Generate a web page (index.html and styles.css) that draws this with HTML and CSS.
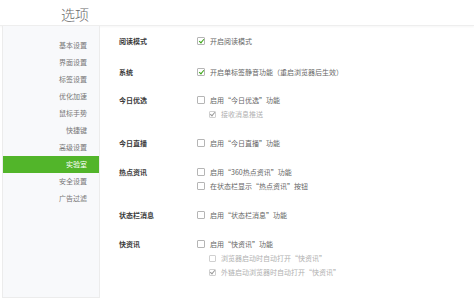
FILE: index.html
```html
<!DOCTYPE html>
<html>

<head>
  <title>选项</title>
  <link rel="stylesheet" href="styles.css">
</head>

<body>
  <div class="header">
    <h1 class="title">选项</h1>
  </div>

  <div class="main">
    <ul class="sidebar">
      <li>基本设置</li>
      <li>界面设置</li>
      <li>标签设置</li>
      <li>优化加速</li>
      <li>鼠标手势</li>
      <li>快捷键</li>
      <li>高级设置</li>
      <li class="active">实验室</li>
      <li>安全设置</li>
      <li>广告过滤</li>
    </ul>

    <div class="content">
      <div class="section first">
        <div class="label">阅读模式</div>
        <div class="options">
          <label class="opt"><span class="box checked"></span>开启阅读模式</label>
        </div>
      </div>

      <div class="section tight">
        <div class="label">系统</div>
        <div class="options">
          <label class="opt"><span class="box checked"></span>开启单标签静音功能（重启浏览器后生效）</label>
        </div>
      </div>

      <div class="section">
        <div class="label">今日优选</div>
        <div class="options">
          <label class="opt"><span class="box"></span>启用“今日优选”功能</label>
          <label class="opt sub disabled"><span class="box checked"></span>接收消息推送</label>
        </div>
      </div>

      <div class="section">
        <div class="label">今日直播</div>
        <div class="options">
          <label class="opt"><span class="box"></span>启用“今日直播”功能</label>
        </div>
      </div>

      <div class="section">
        <div class="label">热点资讯</div>
        <div class="options">
          <label class="opt"><span class="box"></span>启用“360热点资讯”功能</label>
          <label class="opt"><span class="box"></span>在状态栏显示“热点资讯”按钮</label>
        </div>
      </div>

      <div class="section">
        <div class="label">状态栏消息</div>
        <div class="options">
          <label class="opt"><span class="box"></span>启用“状态栏消息”功能</label>
        </div>
      </div>

      <div class="section">
        <div class="label">快资讯</div>
        <div class="options">
          <label class="opt"><span class="box"></span>启用“快资讯”功能</label>
          <label class="opt sub disabled"><span class="box"></span>浏览器启动时自动打开“快资讯”</label>
          <label class="opt sub disabled"><span class="box checked"></span>外链启动浏览器时自动打开“快资讯”</label>
        </div>
      </div>
    </div>
  </div>
</body>

</html>
```

FILE: styles.css
```css
body {
  margin: 0;
  font-family: "Noto Sans CJK SC", "Noto Sans", sans-serif;
  background-color: #ffffff;
  color: #555;
}

.header {
  height: 25px;
  border-bottom: 1px solid #eeeeee;
  box-shadow: 0 1px 2px rgba(0, 0, 0, 0.04);
}

.title {
  margin: 0;
  width: 89px;
  text-align: right;
  font-size: 14px;
  font-weight: 300;
  line-height: 28px;
  color: #6a6a6a;
}

.main {
  display: flex;
  align-items: flex-start;
}

.sidebar {
  list-style: none;
  margin: 0 0 0 2px;
  padding: 11px 0 0;
  width: 96px;
  height: 260px;
  background-color: #f8f9fb;
  border-left: 1px solid #ececec;
  border-right: 1px solid #ececec;
  border-bottom: 1px solid #ececec;
}

.sidebar li {
  height: 17px;
  line-height: 17px;
  padding-right: 12px;
  text-align: right;
  font-size: 7px;
  color: #777;
}

.sidebar li.active {
  background-color: #52b52a;
  color: #ffffff;
}

.content {
  padding: 8px 0 0 19px;
}

.section {
  display: flex;
  margin-bottom: 15px;
}

.section.first {
  margin-bottom: 17px;
}

.section.tight {
  margin-bottom: 14px;
}

.label {
  width: 78px;
  line-height: 14px;
  font-size: 7px;
  font-weight: bold;
  color: #3a3a3a;
}

.opt {
  display: flex;
  align-items: center;
  height: 14px;
  font-size: 7px;
  color: #666;
}

.opt.sub {
  padding-left: 12px;
}

.opt.disabled {
  color: #b0b0b0;
}

.box {
  box-sizing: border-box;
  width: 8px;
  height: 8px;
  margin-right: 5px;
  border: 1px solid #b5b5b5;
  border-radius: 1px;
  background-color: #fff;
  position: relative;
}

.sub .box {
  width: 7px;
  height: 7px;
  border-color: #d0d0d0;
}

.box.checked::after {
  content: "";
  position: absolute;
  left: 1.5px;
  top: 0px;
  width: 2px;
  height: 4px;
  border-right: 1.4px solid #3aa515;
  border-bottom: 1.4px solid #3aa515;
  transform: rotate(40deg);
}

.sub .box.checked::after {
  left: 1.3px;
  top: -0.3px;
  border-color: #9a9a9a;
}
```
